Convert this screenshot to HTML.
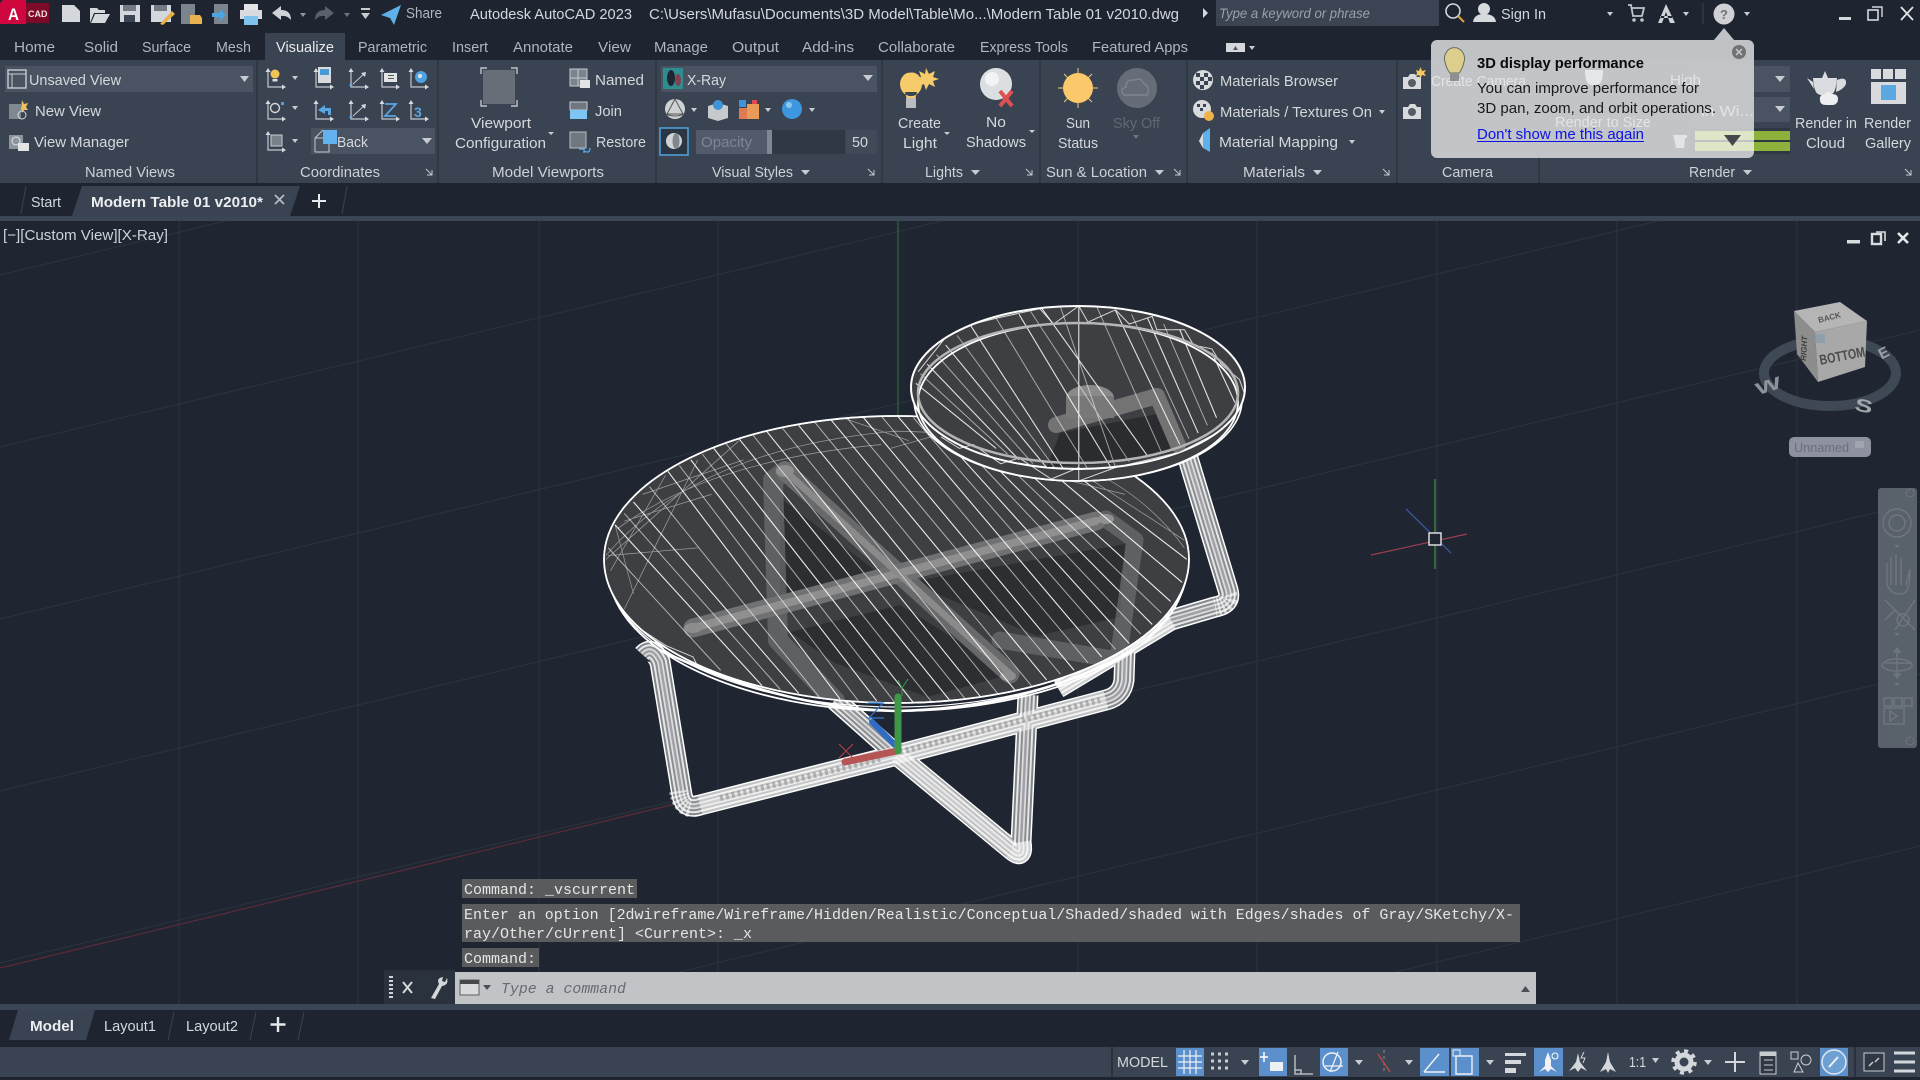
<!DOCTYPE html>
<html><head><meta charset="utf-8"><title>Autodesk AutoCAD 2023</title>
<style>
html,body{margin:0;padding:0;background:#1f2631;width:1920px;height:1080px;overflow:hidden}
svg{display:block;position:absolute;left:0;top:0;overflow:hidden}
text{font-family:"Liberation Sans",sans-serif;font-size:15px;fill:#d4d8dd}
.tab{fill:#aeb6c0}
.ttl{fill:#cdd2d8}
.m{font-family:"Liberation Mono",monospace;font-size:15px;fill:#e6e6e6}
.ar{fill:#c8ccd2}
.z path{vector-effect:non-scaling-stroke;fill:none}
</style></head><body>
<svg width="1920" height="1080" viewBox="0 0 1920 1080" xmlns="http://www.w3.org/2000/svg">
<defs>
<clipPath id="cb"><ellipse cx="896.500" cy="559.500" rx="292.500" ry="143.500"/></clipPath>
<clipPath id="cs"><ellipse cx="1078" cy="387.500" rx="167" ry="81.500"/></clipPath>
<g id="tb" fill="none" stroke-linejoin="round">
<path d="M1187 455L1228 590Q1232 604 1215 607L1171 620L1058 688"/>
<path d="M643 655Q652 645 660 662L682 795Q685 810 700 805L897 755L1106 700Q1122 696 1124 680L1125 650"/>
<path d="M835 700L897 755L1012 850Q1024 860 1021 842L1028 695"/>
</g>
<g id="ax" fill="none" stroke="#c3c8ce" stroke-width="1.200"><path d="M3 2V19H19"/><path d="M3 0l-2.500 4h5zM21 19l-4 -2.500v5z" fill="#d6d9dd" stroke="none"/></g>
</defs>

<rect width="1920" height="1080" fill="#1f2631"/>

<!-- grid -->
<g stroke="#2c3440" stroke-width="1" fill="none">
<path d="M179 221V1004M358 221V1004M539 221V1004M718 221V1004M1078 221V1004M1257 221V1004M1437 221V1004M1617 221V1004M1797 221V1004"/>
<path d="M0 275L225 221M0 447L942 221M0 619L1658 221M0 791L1920 330M0 963L1920 502M546 1004L1920 674M1262 1004L1920 846"/>
</g>
<path d="M0 968L404 870L897 750" stroke="#5c2b3a" stroke-width="1.200" fill="none"/>
<path d="M898 221V755" stroke="#2b6a35" stroke-width="1.200"/>

<!-- legs -->
<use href="#tb" stroke="#fff" stroke-width="21"/>
<use href="#tb" stroke="#30353c" stroke-width="18" opacity=".6"/>
<use href="#tb" stroke="#fff" stroke-width="14" opacity=".8"/>
<use href="#tb" stroke="#30353c" stroke-width="10" opacity=".5"/>
<use href="#tb" stroke="#fff" stroke-width="6" opacity=".7"/>
<use href="#tb" stroke="#30353c" stroke-width="2.500" opacity=".35"/>
<g fill="none">
<path d="M700 805L897 755L1106 700" stroke="#fff" stroke-width="18" opacity=".5"/>
<path d="M897 755L1012 850" stroke="#fff" stroke-width="17" opacity=".45"/>
<path d="M1171 620L1058 688" stroke="#fff" stroke-width="18" opacity=".6"/>
<path d="M1228 595Q1232 604 1215 607" stroke="#fff" stroke-width="18" stroke-dasharray="2 2" opacity=".6"/>
<path d="M690 808Q680 806 678 790" stroke="#fff" stroke-width="18" stroke-dasharray="2 2" opacity=".6"/>
<path d="M1012 850Q1024 860 1021 842" stroke="#fff" stroke-width="18" opacity=".6"/>
<path d="M720 798L880 759M900 752L1100 700" stroke="#8f8f8f" stroke-width="6" stroke-dasharray="3 3" opacity=".6"/>
</g>

<!-- big table -->
<ellipse cx="897" cy="568" rx="289" ry="143" fill="none" stroke="#fff" stroke-width="1.800"/>
<ellipse cx="897" cy="564" rx="291" ry="143" fill="none" stroke="#fff" stroke-width="1.200"/>
<ellipse cx="896.500" cy="559.500" rx="292.500" ry="143.500" fill="#3d3f42" stroke="#fff" stroke-width="1.600"/>
<g clip-path="url(#cb)">
<path d="M780 498L881 575L780 609Z M790 632L900 605L1012 674L927 697L835 663Z M909 582L1125 544L1120 617L1037 636Z" fill="#2c2e32"/>
<g fill="none" stroke="#707172" stroke-linecap="round" stroke-linejoin="round">
<path d="M693 628L1096 521" stroke-width="19"/>
<path d="M785 471L1010 674" stroke-width="19" opacity=".85"/>
<path d="M785 471L773 480L778 640L835 701" stroke-width="20" opacity=".65"/>
<path d="M1106 519L1135 540L1118 660L1000 640" stroke-width="17" opacity=".65"/>
<path d="M693 628L1096 521" stroke="#8f8f8f" stroke-width="8" stroke-dasharray="2 2"/>
<path d="M785 471L1010 674" stroke="#8a8a8a" stroke-width="7" stroke-dasharray="2 3"/>
</g>
<ellipse cx="785" cy="471" rx="9" ry="6" fill="#8d8d8d"/><ellipse cx="1106" cy="519" rx="8" ry="5" fill="#909090"/>
<ellipse cx="693" cy="628" rx="9" ry="5" fill="#8d8d8d"/><ellipse cx="1008" cy="676" rx="8" ry="5" fill="#8d8d8d"/>
<g class="z" transform="translate(560 280) scale(.4591 .3827)">
<path stroke="#fff" stroke-width="1.100" opacity=".9" d="M120 640L440 1060M160 580L520 1080M235 500L610 1095M285 470L690 1100M335 440L770 1105M390 415L850 1100M450 395L920 1095M520 380L1000 1085M590 365L1060 1045M660 358L1120 1020M735 355L1180 985M800 365L1240 950M860 380L1290 900M930 405L1330 840M990 420L1355 790M1060 450L1365 730"/>
<path stroke="#fff" stroke-width="1" opacity=".6" d="M105 700L350 1020M140 610L480 1070M195 540L565 1090M260 485L650 1100M310 455L730 1105M362 428L810 1103M420 405L885 1098M485 388L960 1090M555 372L1030 1065M625 360L1090 1030M700 356L1150 1000M770 360L1210 965M830 372L1265 925M895 392L1310 870"/>
<path stroke="#fff" stroke-width=".8" opacity=".45" d="M100 720Q300 440 730 395Q1180 400 1360 700M125 650Q330 470 700 430M230 510L110 760M300 470L140 860M390 420L100 730M180 560L400 470M140 630L330 560M105 720L300 700M160 820L120 640M1090 470L1360 680M1230 560L960 480M620 362L760 420M880 385L720 440"/>
<path stroke="#fff" stroke-width="1" opacity=".8" d="M160 900L230 955L290 985L300 1010L370 1040L400 1055L470 1075L500 1090L570 1105L600 1115L680 1125L740 1130L830 1125L900 1115L920 1100L990 1090L1050 1070L1110 1050L1170 1020L1230 980L1290 930"/>
</g>
</g>
<ellipse cx="896.500" cy="559.500" rx="292.500" ry="143.500" fill="none" stroke="#fff" stroke-width="1.700"/>
<path d="M660 650Q780 708 897 711Q1030 708 1134 650" fill="none" stroke="#fff" stroke-width="2.500"/>

<!-- small table -->
<ellipse cx="1078" cy="400" rx="164" ry="81" fill="#3d3f42" stroke="#fff" stroke-width="1.600"/>
<ellipse cx="1078" cy="387.500" rx="167" ry="81.500" fill="#3d3f42" stroke="#fff" stroke-width="2"/>
<g clip-path="url(#cs)">
<path d="M1060 433L1157 414L1171 448L1111 464L1047 467Z" fill="#2a2c2f"/>
<g fill="none" stroke="#737373" stroke-linecap="round" stroke-linejoin="round">
<path d="M1056 425L1157 396L1178 445" stroke-width="16"/>
</g>
<ellipse cx="1090" cy="398" rx="24" ry="13" fill="#8a8a8a"/>
<rect x="1066" y="396" width="48" height="22" fill="#787878"/>
<g class="z" transform="translate(560 280) scale(.4591 .3827)">
<path stroke="#fff" stroke-width="1.100" opacity=".85" d="M775 270L950 440M800 220L1000 470M840 170L1060 490M895 120L1100 500M1000 90L1200 490M1050 75L1280 460M1130 68L1130 525M1210 80L1350 430M1280 100L1390 400M1350 130L1430 360M1420 190L1470 320"/>
<path stroke="#fff" stroke-width="1" opacity=".55" d="M785 245L975 455M820 195L1030 480M865 145L1080 495M950 100L1150 495M1025 82L1240 475M1090 70L1210 490M1170 72L1310 450M1245 90L1370 415M1315 115L1410 380"/>
</g>
</g>
<g class="z" transform="translate(560 280) scale(.4591 .3827)">
<path stroke="#fff" stroke-width="1" opacity=".8" d="M780 240L840 150L900 115L950 100L1045 75L1075 115L1130 68L1150 110L1210 78L1240 115L1290 95L1300 130L1360 130L1380 170L1420 180L1440 220L1480 260L1492 300"/>
<path stroke="#fff" stroke-width="1" opacity=".8" d="M830 410L870 440L900 430L960 480L1000 465L1070 520L1130 490L1130 525L1210 490L1280 470L1350 450L1430 400"/>
</g>
<ellipse cx="1078" cy="402" rx="160" ry="79" fill="none" stroke="#fff" stroke-width="1.800"/>
<ellipse cx="1078" cy="393" rx="160" ry="70" fill="none" stroke="#b5b5b5" stroke-width="2.500"/>

<!-- UCS -->
<g stroke-linecap="round">
<path d="M872 722L895 745" stroke="#2f6cc4" stroke-width="6"/>
<path d="M845 762L897 751" stroke="#b65556" stroke-width="7"/>
<path d="M898 697V751" stroke="#3e9748" stroke-width="7"/>
</g>
<path d="M898 680l4 8l6 -9M902 688v8" fill="none" stroke="#3e9748" stroke-width="1"/>
<path d="M868 703h15l-14 15h15" fill="none" stroke="#2f7ad8" stroke-width="1.200"/>
<path d="M839 744l14 14M853 744l-14 14" stroke="#b8404a" stroke-width="1"/>

<!-- crosshair -->
<path d="M1435 479V569" stroke="#3f9a3f" stroke-width="1.200"/>
<path d="M1371 555L1467 534" stroke="#9c3f50" stroke-width="1.200"/>
<path d="M1406 509L1451 553" stroke="#3a5eb0" stroke-width="1.200"/>
<rect x="1429" y="533" width="12" height="12" fill="#1f2631" stroke="#e8e8e8" stroke-width="1.400"/>

<!-- viewcube -->
<ellipse cx="1830" cy="373" rx="66" ry="33" fill="none" stroke="#3f4955" stroke-width="10"/>
<text x="1755" y="392" transform="rotate(-18 1767 385)" textLength="26" lengthAdjust="spacingAndGlyphs" style="font-size:17px;font-weight:bold;fill:#8e9399">W</text>
<text x="1855" y="412" transform="rotate(12 1864 405)" textLength="18" lengthAdjust="spacingAndGlyphs" style="font-size:18px;font-weight:bold;fill:#a3a7ac">S</text>
<text x="1878" y="357" transform="rotate(-28 1885 351)" style="font-size:15px;font-weight:bold;fill:#9ca0a5">E</text>
<path d="M1794 311L1840 302L1867 321L1815 332Z" fill="#b5b5b5"/>
<path d="M1815 332L1867 321L1865 367L1818 382Z" fill="#a8a8a8"/>
<path d="M1794 311L1815 332L1818 382L1797 354Z" fill="#8d8d8d"/>
<rect x="1816" y="334" width="9" height="9" fill="#8fa0ac"/>
<text x="1819" y="361" transform="rotate(-11 1840 355)" style="font-size:14px;font-weight:bold;fill:#4c4c4c" textLength="46" lengthAdjust="spacingAndGlyphs">BOTTOM</text>
<text x="1818" y="320" transform="rotate(-14 1830 318)" style="font-size:8px;font-weight:bold;fill:#555">BACK</text>
<text x="1806" y="361" transform="rotate(-87 1806 361)" style="font-size:8px;font-style:italic;font-weight:bold;fill:#3d3d3d">RIGHT</text>
<rect x="1789" y="437" width="82" height="20" rx="5" fill="#8e92a0"/>
<text x="1794" y="452" textLength="55" lengthAdjust="spacingAndGlyphs" style="font-size:13px;fill:#6b6f7c">Unnamed</text>
<rect x="1855" y="441" width="9" height="7" fill="#a1a5b1"/>

<!-- nav bar -->
<rect x="1878" y="488" width="39" height="260" rx="3" fill="#59616a"/>
<g fill="none" stroke="#6f767e" stroke-width="1.400">
<circle cx="1897" cy="523" r="14"/><circle cx="1897" cy="523" r="8"/>
<path d="M1887 585v-22M1891 585v-28M1896 585v-30M1901 585v-27M1906 585l4 -16M1887 585q6 12 18 8q5 -4 5 -24"/>
<path d="M1885 600l30 30M1915 600l-20 30M1885 620l10 -10"/><circle cx="1903" cy="620" r="6"/>
<path d="M1897 648v30M1885 663h26M1897 648l-3 4h6zM1897 678l-3 -4h6z"/><ellipse cx="1897" cy="665" rx="15" ry="6"/>
<rect x="1884" y="698" width="8" height="8"/><rect x="1894" y="698" width="8" height="8"/><rect x="1904" y="698" width="8" height="8"/>
<rect x="1884" y="708" width="20" height="16"/><path d="M1890 711v10l7 -5z"/>
</g>
<circle cx="1910" cy="493" r="4" fill="none" stroke="#6f767e"/><circle cx="1910" cy="741" r="4" fill="none" stroke="#6f767e"/>
<path d="M1894 545h6l-3 3zM1894 633h6l-3 3zM1894 683h6l-3 3z" fill="#6f767e"/>

<!-- viewport controls -->
<rect x="1847" y="240" width="13" height="3.500" fill="#d9dcdf"/>
<rect x="1872" y="234" width="9" height="10" fill="none" stroke="#d9dcdf" stroke-width="2.400"/><path d="M1876 232h9v9" fill="none" stroke="#d9dcdf" stroke-width="1.600"/>
<path d="M1898 233l10 10M1908 233l-10 10" stroke="#e4e6e8" stroke-width="2.600"/>

<!-- header band -->
<rect x="0" y="0" width="1920" height="60" fill="#1e2530"/>
<rect x="1216" y="0" width="223" height="26" fill="#3a4452"/>
<rect x="265" y="33" width="80" height="27" fill="#3a4351"/>

<!-- ribbon -->
<rect x="0" y="60" width="1920" height="123" fill="#3a4351"/>
<g stroke="#2a313c" stroke-width="1.200">
<path d="M257 60V183M438 60V183M656 60V183M882 60V183M1040 60V183M1187 60V183M1397 60V183M1539 60V183"/>
</g>
<rect x="0" y="183" width="1920" height="33" fill="#1e2530"/>
<rect x="0" y="216" width="1920" height="5" fill="#3a4655"/>

<!-- title bar -->
<path d="M0 3L3 0H26V24H0Z" fill="#d0063f"/><rect x="26" y="3" width="23" height="20" fill="#7d0b27"/>
<text x="8" y="20" style="font-size:17px;font-weight:bold;fill:#fff" textLength="11" lengthAdjust="spacingAndGlyphs">A</text>
<text x="28" y="17" style="font-size:9px;font-weight:bold;fill:#f5dbe0">CAD</text>
<path d="M62 5H74L80 11V22H62Z" fill="#d4d7db"/>
<path d="M90 8H97L99 10H105V13H94L90 23ZM95 14H110L105 23H91Z" fill="#d4d7db"/>
<path d="M120 5H140V22H120Z" fill="#d4d7db"/><rect x="123" y="5" width="13" height="6" fill="#737a84"/><rect x="124" y="15" width="11" height="7" fill="#3a4452"/>
<path d="M151 5H171V22H151Z" fill="#d4d7db"/><rect x="154" y="5" width="13" height="6" fill="#737a84"/><path d="M160 24L172 11L175 14L163 25Z" fill="#e8b04a"/>
<rect x="181" y="4" width="14" height="20" fill="#7c848d"/><path d="M190 15H200L202 18V24H190Z" fill="#eab24e"/>
<rect x="214" y="4" width="14" height="20" fill="#7c848d"/><path d="M212 13h8v-4l6 6l-6 6v-4h-8z" fill="#4aa5e0"/>
<rect x="244" y="4" width="14" height="6" fill="#e2e4e6"/><rect x="240" y="10" width="22" height="9" fill="#d8dadd"/><rect x="244" y="16" width="14" height="9" fill="#7fc2ee"/>
<path d="M272 13L281 6V10Q291 10 291 20Q287 15 281 16V20Z" fill="#cfd3d7"/>
<path d="M300 13h6l-3 4z" fill="#8f969e"/>
<path d="M334 13L325 6V10Q315 10 315 20Q319 15 325 16V20Z" fill="#59616b"/>
<path d="M344 13h6l-3 4z" fill="#6f767e"/>
<path d="M361 8h9v2h-9zM361 13h9l-4.500 6z" fill="#c7cbd0"/>
<path d="M381 15L401 5L394 25L390 18Z" fill="#5fb0e6"/>
<text x="406" y="18" textLength="36" lengthAdjust="spacingAndGlyphs" style="fill:#aeb6c0">Share</text>
<text x="470" y="19" textLength="162" lengthAdjust="spacingAndGlyphs">Autodesk AutoCAD 2023</text>
<text x="649" y="19" textLength="530" lengthAdjust="spacingAndGlyphs">C:\Users\Mufasu\Documents\3D Model\Table\Mo...\Modern Table 01 v2010.dwg</text>
<path d="M1203 8l5 5l-5 5z" fill="#d4d8dd"/>
<text x="1219" y="18" textLength="151" lengthAdjust="spacingAndGlyphs" style="font-style:italic;fill:#98a1ac;font-size:14px">Type a keyword or phrase</text>
<circle cx="1453" cy="11" r="7" fill="none" stroke="#d4d8dd" stroke-width="1.600"/><path d="M1458 16l6 6" stroke="#d9a13f" stroke-width="2"/>
<circle cx="1484" cy="9" r="6" fill="#d8dbde"/><path d="M1473 22Q1474 14 1484 14Q1495 14 1496 22Z" fill="#d8dbde"/>
<text x="1501" y="19" textLength="45" lengthAdjust="spacingAndGlyphs">Sign In</text>
<path d="M1607 12h6l-3 4z" class="ar"/>
<path d="M1628 5h3l2 11h9l2 -8h-12" fill="none" stroke="#bfc4c9" stroke-width="1.800"/><circle cx="1634" cy="20" r="1.800" fill="#bfc4c9"/><circle cx="1642" cy="20" r="1.800" fill="#bfc4c9"/>
<path d="M1666 4L1658 23H1662L1666 12L1670 23H1675ZM1660 16h12v2h-12z" fill="#cfd3d7"/>
<path d="M1683 12h6l-3 4z" class="ar"/>
<path d="M1703 3V24" stroke="#3a4452"/>
<circle cx="1724" cy="14" r="10.500" fill="#cfd1d4"/>
<text x="1720" y="19" style="font-size:13px;font-weight:bold;fill:#6d7176">?</text>
<path d="M1744 12h6l-3 4z" class="ar"/>
<rect x="1839" y="17" width="12" height="3" fill="#d4d8dd"/>
<rect x="1868" y="10" width="10" height="10" fill="none" stroke="#d4d8dd" stroke-width="1.600"/><path d="M1872 7h10v10" fill="none" stroke="#d4d8dd" stroke-width="1.400"/>
<path d="M1901 7l12 13M1913 7l-12 13" stroke="#e2e4e6" stroke-width="1.800"/>

<!-- tabs -->
<text class="tab" x="14" y="52" textLength="41" lengthAdjust="spacingAndGlyphs">Home</text>
<text class="tab" x="84" y="52" textLength="34" lengthAdjust="spacingAndGlyphs">Solid</text>
<text class="tab" x="142" y="52" textLength="49" lengthAdjust="spacingAndGlyphs">Surface</text>
<text class="tab" x="216" y="52" textLength="35" lengthAdjust="spacingAndGlyphs">Mesh</text>
<text x="276" y="52" textLength="58" lengthAdjust="spacingAndGlyphs" style="fill:#e8eaec">Visualize</text>
<text class="tab" x="358" y="52" textLength="69" lengthAdjust="spacingAndGlyphs">Parametric</text>
<text class="tab" x="452" y="52" textLength="36" lengthAdjust="spacingAndGlyphs">Insert</text>
<text class="tab" x="513" y="52" textLength="60" lengthAdjust="spacingAndGlyphs">Annotate</text>
<text class="tab" x="598" y="52" textLength="33" lengthAdjust="spacingAndGlyphs">View</text>
<text class="tab" x="654" y="52" textLength="54" lengthAdjust="spacingAndGlyphs">Manage</text>
<text class="tab" x="732" y="52" textLength="47" lengthAdjust="spacingAndGlyphs">Output</text>
<text class="tab" x="802" y="52" textLength="52" lengthAdjust="spacingAndGlyphs">Add-ins</text>
<text class="tab" x="878" y="52" textLength="77" lengthAdjust="spacingAndGlyphs">Collaborate</text>
<text class="tab" x="980" y="52" textLength="88" lengthAdjust="spacingAndGlyphs">Express Tools</text>
<text class="tab" x="1092" y="52" textLength="96" lengthAdjust="spacingAndGlyphs">Featured Apps</text>
<rect x="1226" y="43" width="19" height="9" fill="#d4d7db"/><path d="M1233 50h5l-2.500 -4z" fill="#555"/><path d="M1249 46h6l-3 4z" class="ar"/>

<!-- Named Views -->
<rect x="5" y="66" width="248" height="26" fill="#4a5361"/>
<rect x="8" y="70" width="18" height="18" fill="none" stroke="#c9cdd2" stroke-width="1.400"/><path d="M8 74h18M12 74v14" stroke="#c9cdd2"/>
<text x="29" y="85" textLength="92" lengthAdjust="spacingAndGlyphs">Unsaved View</text>
<path d="M240 76h9l-4.500 6z" class="ar"/>
<rect x="9" y="104" width="12" height="15" fill="#808890"/><path d="M22 100l2 4l4 -1l-2 4l2 3l-4 0l-2 3l-1 -4z" fill="#f0c060"/><circle cx="22" cy="115" r="4" fill="none" stroke="#d4d7db"/>
<text x="35" y="116" textLength="66" lengthAdjust="spacingAndGlyphs">New View</text>
<path d="M9 135h14v14h-14z" fill="#8d959d"/><circle cx="16" cy="141" r="4" fill="none" stroke="#e2e4e6"/><rect x="18" y="143" width="11" height="8" fill="#e2e4e6"/>
<text x="34" y="147" textLength="95" lengthAdjust="spacingAndGlyphs">View Manager</text>
<text class="ttl" x="85" y="177" textLength="90" lengthAdjust="spacingAndGlyphs">Named Views</text>

<!-- Coordinates -->
<use href="#ax" x="265" y="68"/><use href="#ax" x="313" y="68"/><use href="#ax" x="348" y="68"/><use href="#ax" x="379" y="68"/><use href="#ax" x="408" y="68"/>
<use href="#ax" x="265" y="100"/><use href="#ax" x="313" y="100"/><use href="#ax" x="348" y="100"/><use href="#ax" x="379" y="100"/><use href="#ax" x="408" y="100"/>
<use href="#ax" x="265" y="131"/>
<path d="M353 84l12 -11M353 116l12 -11" stroke="#c3c8ce" fill="none"/>
<path d="M366 72l-5 1l4 4zM366 104l-5 1l4 4z" fill="#d6d9dd"/>
<circle cx="351" cy="85" r="1.500" fill="#5fb0e6"/><circle cx="351" cy="117" r="1.500" fill="#5fb0e6"/>
<circle cx="275" cy="74" r="4.500" fill="#f1c458"/><rect x="272.500" y="79" width="5" height="2.500" fill="#d8dadd"/>
<rect x="318" y="67" width="13" height="16" fill="#d8dadd"/><rect x="320" y="69" width="9" height="6" fill="#4a9ad8"/>
<rect x="384" y="73" width="13" height="9" fill="#e2e4e6"/><path d="M388 75.500h6M388 78.500h6" stroke="#555"/>
<circle cx="421" cy="77" r="6" fill="#4fa1e0"/><circle cx="420" cy="76" r="2" fill="#e2e4e6"/>
<circle cx="275" cy="108" r="4.500" fill="none" stroke="#d4d7db" stroke-width="1.400"/><rect x="281" y="102" width="3" height="3" fill="#4fa1e0"/>
<path d="M318 110l7 -5v3h6v7h-3v-4h-3v3z" fill="#58a6e2"/>
<path d="M385 104h11l-11 12h11" fill="none" stroke="#58a6e2" stroke-width="1.800"/>
<text x="414" y="117" style="font-size:14px;font-weight:bold;fill:#58a6e2">3</text>
<rect x="271" y="135" width="11" height="11" fill="#78808a" stroke="#c9cdd2"/>
<path d="M292 76h6l-3 4zM292 106h6l-3 4zM292 139h6l-3 4z" class="ar"/>
<rect x="311" y="128" width="124" height="26" fill="#4a5361"/>
<rect x="323" y="130" width="14" height="14" fill="#62b2ef"/><path d="M315 152V138L323 130M315 152h14V144M315 138h8" fill="none" stroke="#c3c8ce"/>
<text x="337" y="147" textLength="31" lengthAdjust="spacingAndGlyphs">Back</text>
<path d="M422 138h10l-5 6z" class="ar"/>
<text class="ttl" x="300" y="177" textLength="80" lengthAdjust="spacingAndGlyphs">Coordinates</text>
<path d="M426 169l6 6M432 170v5h-5" stroke="#c3c8ce" fill="none"/>

<!-- Model viewports -->
<rect x="483" y="70" width="32" height="34" fill="#686e78"/>
<path d="M481 74v-6h6M511 68h6v6M517 100v6h-6M487 106h-6v-6" fill="none" stroke="#bfc4c9" stroke-width="1.400"/>
<text x="471" y="128" textLength="60" lengthAdjust="spacingAndGlyphs">Viewport</text>
<text x="455" y="148" textLength="91" lengthAdjust="spacingAndGlyphs">Configuration</text>
<path d="M548 132h6l-3 3z" class="ar"/>
<rect x="570" y="69" width="17" height="17" fill="#7b838c" stroke="#c3c8ce"/><path d="M578 69v17M570 78h17" stroke="#c3c8ce"/><rect x="580" y="80" width="10" height="8" fill="#e2e4e6"/>
<text x="595" y="85" textLength="49" lengthAdjust="spacingAndGlyphs">Named</text>
<rect x="570" y="102" width="17" height="8" fill="#6f7780" stroke="#c3c8ce"/><rect x="570" y="110" width="17" height="9" fill="#7dc6f4"/>
<text x="595" y="116" textLength="27" lengthAdjust="spacingAndGlyphs">Join</text>
<rect x="570" y="132" width="16" height="16" fill="#6f7780" stroke="#b8bdc3"/><path d="M584 151q6 3 6 -3M579 149h5v4" fill="none" stroke="#58a6e2" stroke-width="1.400"/>
<text x="596" y="147" textLength="50" lengthAdjust="spacingAndGlyphs">Restore</text>
<text class="ttl" x="492" y="177" textLength="112" lengthAdjust="spacingAndGlyphs">Model Viewports</text>

<!-- Visual styles -->
<rect x="661" y="66" width="216" height="26" fill="#4a5361"/>
<rect x="663" y="68" width="20" height="21" fill="#2e8e8f"/><ellipse cx="671" cy="78" rx="4" ry="8" fill="#1f2631"/><ellipse cx="678" cy="80" rx="3" ry="6" fill="#82414e"/>
<text x="687" y="85" textLength="39" lengthAdjust="spacingAndGlyphs">X-Ray</text>
<path d="M863 75h10l-5 6z" class="ar"/>
<circle cx="675" cy="109" r="10" fill="#cfd2d5"/><path d="M675 99l-8 15h16zM666 114q9 4 18 0" fill="none" stroke="#555"/>
<path d="M691 108h6l-3 4zM765 108h6l-3 4zM809 108h6l-3 4z" class="ar"/>
<path d="M708 106l10 -3l10 3v12l-10 3l-10 -3z" fill="#c7cacd"/><circle cx="718" cy="105" r="5" fill="#3f93d8"/>
<rect x="739" y="100" width="7" height="7" fill="#3f93d8"/><rect x="747" y="104" width="12" height="15" fill="#e89b58"/><rect x="739" y="108" width="8" height="11" fill="#e07a50"/><rect x="752" y="100" width="5" height="4" fill="#e04a50"/>
<circle cx="792" cy="109" r="10" fill="#3d96e0"/><circle cx="789" cy="105" r="3" fill="#8ec8f0"/>
<rect x="660" y="128" width="28" height="27" fill="#2b3644" stroke="#4fa4e0" stroke-width="1.500"/>
<circle cx="674" cy="141" r="8" fill="#d0d3d6"/><ellipse cx="676" cy="141" rx="3.500" ry="8" fill="#80878e"/>
<rect x="696" y="130" width="149" height="24" fill="#2f3844"/><rect x="696" y="130" width="76" height="24" fill="#515b6c"/><rect x="767" y="130" width="5" height="24" fill="#7d8795"/>
<text x="701" y="147" textLength="51" lengthAdjust="spacingAndGlyphs" style="fill:#7c8693">Opacity</text>
<rect x="846" y="130" width="31" height="24" fill="#414a58"/>
<text x="852" y="147" textLength="16" lengthAdjust="spacingAndGlyphs">50</text>
<text class="ttl" x="712" y="177" textLength="81" lengthAdjust="spacingAndGlyphs">Visual Styles</text>
<path d="M801 170h9l-4.500 5z" class="ar"/>
<path d="M868 169l6 6M874 170v5h-5" stroke="#c3c8ce" fill="none"/>

<!-- Lights -->
<path d="M907 73a11 12 0 1 0 8 0q-2 -1 -8 0zM905 92h12l-2 8h-8z" fill="#f6cc6b"/><rect x="906" y="98" width="10" height="10" fill="#b9bdc2"/>
<path d="M926 68l3 6l6 -3l-2 6l6 2l-6 2l2 6l-6 -3l-3 6l-2 -6l-6 3l3 -6l-5 -2l5 -2l-2 -6l6 3z" fill="#f6cc6b"/>
<text x="898" y="128" textLength="43" lengthAdjust="spacingAndGlyphs">Create</text>
<text x="903" y="148" textLength="34" lengthAdjust="spacingAndGlyphs">Light</text>
<path d="M944 132h6l-3 3z" class="ar"/>
<circle cx="996" cy="84" r="16" fill="#dcdfe2"/><circle cx="992" cy="79" r="7" fill="#f2f3f4"/>
<path d="M1000 91l12 15M1012 91l-12 15" stroke="#e05050" stroke-width="4"/>
<text x="986" y="127" textLength="20" lengthAdjust="spacingAndGlyphs">No</text>
<text x="966" y="147" textLength="60" lengthAdjust="spacingAndGlyphs">Shadows</text>
<path d="M1029 130h6l-3 3z" class="ar"/>
<text class="ttl" x="925" y="177" textLength="38" lengthAdjust="spacingAndGlyphs">Lights</text>
<path d="M971 170h9l-4.500 5z" class="ar"/>
<path d="M1026 169l6 6M1032 170v5h-5" stroke="#c3c8ce" fill="none"/>

<!-- Sun -->
<path d="M1078 68v40M1058 88h40M1064 74l28 28M1092 74l-28 28" stroke="#f4cd73" stroke-width="1"/>
<circle cx="1078" cy="88" r="15" fill="#fbc86c"/>
<text x="1066" y="128" textLength="24" lengthAdjust="spacingAndGlyphs">Sun</text>
<text x="1058" y="148" textLength="40" lengthAdjust="spacingAndGlyphs">Status</text>
<circle cx="1137" cy="88" r="20" fill="#666d78"/>
<path d="M1124 95q-5 -6 2 -8q0 -8 9 -7q6 -3 9 4q7 3 3 11z" fill="none" stroke="#7e858f" stroke-width="1.400"/>
<text x="1113" y="128" textLength="47" lengthAdjust="spacingAndGlyphs" style="fill:#5f6874">Sky Off</text>
<path d="M1133 135h6l-3 4z" fill="#6f7680"/>
<text class="ttl" x="1046" y="177" textLength="101" lengthAdjust="spacingAndGlyphs">Sun &amp; Location</text>
<path d="M1155 170h9l-4.500 5z" class="ar"/>
<path d="M1174 169l6 6M1180 170v5h-5" stroke="#c3c8ce" fill="none"/>

<!-- Materials -->
<circle cx="1203" cy="80" r="10" fill="#d8dadd"/>
<g fill="#3a4351"><rect x="1196" y="73" width="4" height="4"/><rect x="1204" y="73" width="4" height="4"/><rect x="1200" y="77" width="4" height="4"/><rect x="1208" y="77" width="4" height="4"/><rect x="1196" y="81" width="4" height="4"/><rect x="1204" y="81" width="4" height="4"/><rect x="1200" y="85" width="4" height="4"/></g>
<circle cx="1202" cy="109" r="9" fill="#d8dadd"/><circle cx="1209" cy="116" r="5" fill="#eeb347"/>
<g fill="#3a4351"><rect x="1197" y="104" width="3" height="3"/><rect x="1203" y="104" width="3" height="3"/><rect x="1200" y="108" width="3" height="3"/></g>
<path d="M1203 133l7 -5v24l-7 -4l-4 -7z" fill="#5eb0ea"/><path d="M1199 141l4 -8v15z" fill="#d8dadd"/>
<text x="1220" y="86" textLength="118" lengthAdjust="spacingAndGlyphs">Materials Browser</text>
<text x="1220" y="117" textLength="152" lengthAdjust="spacingAndGlyphs">Materials / Textures On</text>
<path d="M1379 110h6l-3 4z" class="ar"/>
<text x="1219" y="147" textLength="119" lengthAdjust="spacingAndGlyphs">Material Mapping</text>
<path d="M1349 140h6l-3 4z" class="ar"/>
<text class="ttl" x="1243" y="177" textLength="62" lengthAdjust="spacingAndGlyphs">Materials</text>
<path d="M1313 170h9l-4.500 5z" class="ar"/>
<path d="M1383 169l6 6M1389 170v5h-5" stroke="#c3c8ce" fill="none"/>

<!-- Camera & render -->
<path d="M1403 77h5l2 -3h5l2 3h4v12h-18z" fill="#d8dadd"/><circle cx="1412" cy="83" r="4" fill="#555c66"/>
<path d="M1419 71l1.500 -4l1.500 4l4 -1l-2 3l2 3l-4 -1l-1.500 3l-1.500 -3l-3 1l1 -3l-1 -3z" fill="#f6c85f"/>
<path d="M1403 107h5l2 -3h5l2 3h4v12h-18z" fill="#d8dadd"/><circle cx="1412" cy="112" r="4" fill="#555c66"/>
<text class="ttl" x="1442" y="177" textLength="51" lengthAdjust="spacingAndGlyphs">Camera</text>
<text class="ttl" x="1689" y="177" textLength="46" lengthAdjust="spacingAndGlyphs">Render</text>
<path d="M1743 170h9l-4.500 5z" class="ar"/>
<path d="M1905 169l6 6M1911 170v5h-5" stroke="#c3c8ce" fill="none"/>
<rect x="1690" y="66" width="100" height="26" fill="#4a5361"/>
<rect x="1690" y="97" width="100" height="25" fill="#4a5361"/>
<rect x="1690" y="128" width="100" height="26" fill="#2f3844"/>
<rect x="1695" y="131" width="95" height="9" fill="#8db13a"/><rect x="1695" y="142" width="95" height="9" fill="#8db13a"/>
<path d="M1775 76h10l-5 6zM1775 106h10l-5 6z" class="ar"/>
<path d="M1813 78h24q-1 14 -5 16q-6 4 -14 0q-4 -2 -5 -16zM1825 71l3 7h-6zM1837 80q10 -4 9 4q-2 5 -10 8zM1813 82l-6 -4l7 11z" fill="#dadcdf"/>
<path d="M1826 105q-6 0 -6 -5q-1 -5 5 -6q3 -4 7 0q6 0 6 5q0 5 -5 6z" fill="#eceef0"/>
<text x="1795" y="128" textLength="62" lengthAdjust="spacingAndGlyphs">Render in</text>
<text x="1806" y="148" textLength="39" lengthAdjust="spacingAndGlyphs">Cloud</text>
<rect x="1871" y="69" width="10" height="10" fill="#d8dadd"/><rect x="1883" y="69" width="10" height="10" fill="#d8dadd"/><rect x="1895" y="69" width="11" height="10" fill="#d8dadd"/>
<rect x="1871" y="82" width="35" height="22" fill="#d8dadd"/><rect x="1881" y="85" width="15" height="15" fill="#5ca8e0"/>
<text x="1864" y="128" textLength="47" lengthAdjust="spacingAndGlyphs">Render</text>
<text x="1865" y="148" textLength="46" lengthAdjust="spacingAndGlyphs">Gallery</text>

<!-- popup -->
<path d="M1431 46a6 6 0 0 1 6 -6H1714L1724 28L1734 40H1748a6 6 0 0 1 6 6V152a6 6 0 0 1 -6 6H1437a6 6 0 0 1 -6 -6Z" fill="#c9cbcd" fill-opacity=".95"/>
<rect x="1695" y="131" width="59" height="9" fill="#dfe5c7"/><rect x="1695" y="142" width="59" height="9" fill="#dfe5c7"/>
<path d="M1724 135h17l-8.500 11z" fill="#45484a"/>
<g opacity=".7">
<text x="1431" y="86" textLength="95" lengthAdjust="spacingAndGlyphs" style="fill:#f2f2f2">Create Camera</text>
<path d="M1585 70h18q0 12 -4 14q-5 3 -10 0q-4 -2 -4 -14z" fill="#f6f6f6"/>
<text x="1670" y="85" textLength="31" lengthAdjust="spacingAndGlyphs" style="fill:#f2f2f2">High</text>
<text x="1701" y="116" textLength="53" lengthAdjust="spacingAndGlyphs" style="fill:#f2f2f2">in Wi...</text>
<text x="1555" y="127" textLength="96" lengthAdjust="spacingAndGlyphs" style="fill:#f2f2f2">Render to Size</text>
<path d="M1673 135h14v3h-2l-1 10h-8l-2 -10z" fill="#f2f2f2"/>
</g>
<path d="M1445 62a10 11 0 1 1 19 0q-2 8 -5 11h-9q-3 -3 -5 -11z" fill="#dccf8e" stroke="#6b6b5c"/><rect x="1450" y="73" width="9" height="8" fill="#8f9091"/>
<circle cx="1739" cy="52" r="7" fill="#707274"/><path d="M1736 49l6 6M1742 49l-6 6" stroke="#c9cbcd" stroke-width="1.500"/>
<text x="1477" y="68" textLength="167" lengthAdjust="spacingAndGlyphs" style="fill:#0a0a0a;font-weight:bold">3D display performance</text>
<text x="1477" y="93" textLength="222" lengthAdjust="spacingAndGlyphs" style="fill:#1a1a1a">You can improve performance for</text>
<text x="1477" y="113" textLength="239" lengthAdjust="spacingAndGlyphs" style="fill:#1a1a1a">3D pan, zoom, and orbit operations.</text>
<text x="1477" y="139" textLength="167" lengthAdjust="spacingAndGlyphs" style="fill:#0a12e6">Don't show me this again</text>
<path d="M1477 141.500H1644" stroke="#0a12e6"/>

<!-- file tabs -->
<path d="M26 186L21 214" stroke="#3a4452"/>
<text x="31" y="207" textLength="30" lengthAdjust="spacingAndGlyphs">Start</text>
<path d="M72 216L82 186H300L290 216Z" fill="#3a4351"/>
<text x="91" y="207" textLength="172" lengthAdjust="spacingAndGlyphs" style="font-weight:bold;fill:#eceef0">Modern Table 01 v2010*</text>
<path d="M275 195l9 9M284 195l-9 9" stroke="#b4bac1" stroke-width="1.800"/>
<path d="M319 194v14M312 201h14" stroke="#e6e8ea" stroke-width="2"/>
<path d="M347 186L342 214" stroke="#3a4452"/>
<text x="3" y="240" textLength="165" lengthAdjust="spacingAndGlyphs" style="fill:#cdd2d8">[−][Custom View][X-Ray]</text>

<!-- command line -->
<rect x="462" y="879" width="175" height="19" fill="#595b5d"/>
<rect x="462" y="904" width="1058" height="38" fill="#595b5d"/>
<rect x="462" y="948" width="77" height="19" fill="#595b5d"/>
<text class="m" x="464" y="894" textLength="171" lengthAdjust="spacingAndGlyphs">Command: _vscurrent</text>
<text class="m" x="464" y="919" textLength="1050" lengthAdjust="spacingAndGlyphs">Enter an option [2dwireframe/Wireframe/Hidden/Realistic/Conceptual/Shaded/shaded with Edges/shades of Gray/SKetchy/X-</text>
<text class="m" x="464" y="938" textLength="288" lengthAdjust="spacingAndGlyphs">ray/Other/cUrrent] &lt;Current&gt;: _x</text>
<text class="m" x="464" y="963" textLength="72" lengthAdjust="spacingAndGlyphs">Command:</text>
<rect x="384" y="970" width="71" height="34" fill="#2a323e"/>
<path d="M391 976V998" stroke="#cfd3d7" stroke-width="4" stroke-dasharray="2 2"/>
<path d="M403 982l9 11M412 982l-9 11" stroke="#d4d7db" stroke-width="2"/>
<path d="M431 998l8 -14q-3 -6 4 -7l-1 4l3 1l2 -4q2 7 -5 8l-7 13z" fill="#d4d7db"/>
<rect x="455" y="972" width="1081" height="32" fill="#c1c4c6"/>
<rect x="460" y="980" width="19" height="15" fill="#d8dadc" stroke="#5c5f62"/><rect x="460" y="980" width="19" height="4" fill="#46494c"/>
<path d="M483 985h8l-4 5z" fill="#4b4e52"/>
<text x="501" y="993" textLength="125" lengthAdjust="spacingAndGlyphs" style="font-family:'Liberation Mono',monospace;font-style:italic;font-size:15px;fill:#666a6e">Type a command</text>
<path d="M1521 992l4.500 -6l4.500 6z" fill="#4b4e52"/>

<!-- layout tabs -->
<rect x="0" y="1004" width="1920" height="6" fill="#3a4655"/>
<rect x="0" y="1010" width="1920" height="37" fill="#1e2530"/>
<path d="M9 1040L18 1010H95L86 1040Z" fill="#3a4351"/>
<text x="30" y="1031" textLength="44" lengthAdjust="spacingAndGlyphs" style="font-weight:bold;fill:#eceef0">Model</text>
<text x="104" y="1031" textLength="52" lengthAdjust="spacingAndGlyphs">Layout1</text>
<text x="186" y="1031" textLength="52" lengthAdjust="spacingAndGlyphs">Layout2</text>
<path d="M174 1012L168 1040M256 1012L250 1040M304 1012L298 1040" stroke="#3a4452"/>
<path d="M278 1017v15M270.500 1024.500h15" stroke="#e6e8ea" stroke-width="2.400"/>

<!-- status bar -->
<rect x="0" y="1047" width="1920" height="30" fill="#3a4351"/>
<rect x="0" y="1077" width="1920" height="3" fill="#1e2530"/>
<rect x="1111" y="1047" width="2" height="30" fill="#2a313c"/>
<text x="1117" y="1067" textLength="51" lengthAdjust="spacingAndGlyphs">MODEL</text>
<g fill="#5b90cc">
<rect x="1176" y="1048" width="28" height="28"/><rect x="1259" y="1048" width="28" height="28"/><rect x="1320" y="1048" width="28" height="28"/>
<rect x="1420" y="1048" width="29" height="28"/><rect x="1451" y="1048" width="28" height="28"/><rect x="1534" y="1048" width="29" height="28"/>
</g>
<path d="M1184 1050v24M1190 1050v24M1196 1050v24M1178 1056h24M1178 1062h24M1178 1068h24" stroke="#eef1f4" stroke-width="1.200"/>
<path d="M1211 1054h17M1211 1061h17M1211 1068h17" stroke="#c9cdd2" stroke-width="3" stroke-dasharray="3 4"/>
<path d="M1241 1060h8l-4 5zM1355 1060h8l-4 5zM1405 1060h8l-4 5zM1486 1060h8l-4 5zM1652 1058h7l-3.500 5zM1704 1060h8l-4 5z" class="ar"/>
<path d="M1264 1052v10M1260 1057h8" stroke="#fff" stroke-width="1.500"/><rect x="1270" y="1062" width="13" height="9" fill="#eef1f4"/>
<path d="M1295 1055v19h18M1295 1070h6v4" fill="none" stroke="#c9cdd2" stroke-width="1.300"/>
<circle cx="1332" cy="1062" r="9" fill="none" stroke="#eef1f4" stroke-width="1.500"/><path d="M1325 1066h18M1330 1072l8 -20" stroke="#eef1f4" stroke-width="1.300"/>
<path d="M1384 1050v24" stroke="#8d8d8d" stroke-dasharray="3 3"/><path d="M1378 1054l12 18" stroke="#b54a4f" stroke-width="1.500"/>
<path d="M1424 1072h21M1424 1072l15 -18" fill="none" stroke="#eef1f4" stroke-width="1.500"/>
<rect x="1453" y="1050" width="7" height="6" fill="none" stroke="#eef1f4"/><path d="M1456 1056h16v18h-16z" fill="none" stroke="#eef1f4" stroke-width="1.400"/>
<rect x="1505" y="1053" width="21" height="3" fill="#d4d7db"/><rect x="1505" y="1060" width="16" height="4" fill="#d4d7db"/><rect x="1505" y="1068" width="11" height="5" fill="#d4d7db"/>
<path d="M1548 1052l3 8v6l6 6l-6 -3l-3 3l-3 -3l-6 3l6 -6v-6z" fill="#f0f2f4"/><circle cx="1555" cy="1056" r="3" fill="none" stroke="#fff"/>
<path d="M1578 1053l2 9l7 9l-6 -3l-3 4l-3 -4l-6 3l7 -9z" fill="#d4d7db"/><path d="M1584 1052l-3 6h4l-2 5" stroke="#d4d7db" fill="none"/>
<path d="M1608 1052l2 10l6 10l-6 -3l-2 4l-2 -4l-6 3l6 -10z" fill="#d4d7db"/>
<text x="1629" y="1067" textLength="17" lengthAdjust="spacingAndGlyphs">1:1</text>
<circle cx="1684" cy="1062" r="7" fill="none" stroke="#d4d7db" stroke-width="5"/><circle cx="1684" cy="1062" r="11" fill="none" stroke="#d4d7db" stroke-width="3.500" stroke-dasharray="4 4.600"/>
<path d="M1735 1052v20M1725 1062h20" stroke="#d4d7db" stroke-width="2"/>
<rect x="1760" y="1052" width="16" height="22" fill="#2f3844" stroke="#c9cdd2"/><rect x="1760" y="1052" width="16" height="4" fill="#c9cdd2"/><path d="M1764 1060h9M1764 1065h9M1764 1070h9" stroke="#c9cdd2"/>
<rect x="1791" y="1052" width="7" height="7" fill="none" stroke="#c9cdd2"/><circle cx="1806" cy="1060" r="5" fill="none" stroke="#c9cdd2"/><path d="M1794 1072l4 -9l5 9z" fill="none" stroke="#c9cdd2"/>
<rect x="1820" y="1048" width="28" height="28" fill="#5b90cc"/><circle cx="1834" cy="1062" r="12" fill="#6fa0d4" stroke="#dfe6ef" stroke-width="1.500"/><path d="M1829 1067l9 -10" stroke="#eef1f4" stroke-width="2"/>
<rect x="1854" y="1047" width="2" height="30" fill="#2a313c"/>
<rect x="1864" y="1053" width="20" height="18" fill="#2f3844" stroke="#c9cdd2"/><path d="M1869 1066l4 -4M1879 1058l-4 4" stroke="#c9cdd2" stroke-width="1.500"/>
<path d="M1894 1053h21M1894 1062h21M1894 1071h21" stroke="#d4d7db" stroke-width="3"/>
</svg>
</body></html>
